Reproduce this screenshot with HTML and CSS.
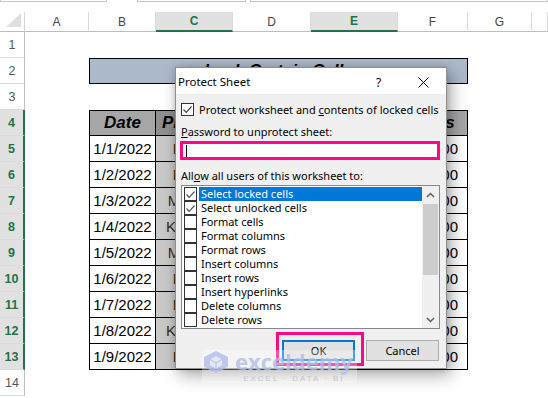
FILE: index.html
```html
<!DOCTYPE html>
<html>
<head>
    <title>Protect Sheet</title>
    <link rel="stylesheet" href="styles.css">
</head>
<body>
    <div class="screen">
        <div class="formula-strip">
            <span class="fbox name-box"></span>
            <span class="fbox fx-box"></span>
            <span class="fbox formula-box"></span>
        </div>

        <div class="sheet">
            <div class="row head-row">
                <div class="corner"><span class="corner-tri"></span></div>
                <div class="col-head">A</div>
                <div class="col-head">B</div>
                <div class="col-head selected">C</div>
                <div class="col-head">D</div>
                <div class="col-head selected">E</div>
                <div class="col-head">F</div>
                <div class="col-head">G</div>
                <div class="col-head"></div>
            </div>

            <div class="row"><div class="row-head">1</div></div>
            <div class="row">
                <div class="row-head">2</div>
                <div></div>
                <div class="title-cell">Lock Certain Cells</div>
            </div>
            <div class="row"><div class="row-head">3</div></div>

            <!-- columns D and E sit fully under the dialog -->
            <div class="row">
                <div class="row-head selected">4</div>
                <div></div>
                <div class="cell th first">Date</div>
                <div class="cell th picked">Product</div>
                <div class="cell th"></div>
                <div class="cell th picked"></div>
                <div class="cell th">Sales</div>
            </div>
            <div class="row">
                <div class="row-head selected">5</div>
                <div></div>
                <div class="cell first">1/1/2022</div>
                <div class="cell picked">Daniel</div>
                <div class="cell"></div>
                <div class="cell picked"></div>
                <div class="cell amount">$1,500</div>
            </div>
            <div class="row">
                <div class="row-head selected">6</div>
                <div></div>
                <div class="cell first">1/2/2022</div>
                <div class="cell picked">Daniel</div>
                <div class="cell"></div>
                <div class="cell picked"></div>
                <div class="cell amount">$2,300</div>
            </div>
            <div class="row">
                <div class="row-head selected">7</div>
                <div></div>
                <div class="cell first">1/3/2022</div>
                <div class="cell picked">Mathew</div>
                <div class="cell"></div>
                <div class="cell picked"></div>
                <div class="cell amount">$1,800</div>
            </div>
            <div class="row">
                <div class="row-head selected">8</div>
                <div></div>
                <div class="cell first">1/4/2022</div>
                <div class="cell picked">Kenneth</div>
                <div class="cell"></div>
                <div class="cell picked"></div>
                <div class="cell amount">$3,100</div>
            </div>
            <div class="row">
                <div class="row-head selected">9</div>
                <div></div>
                <div class="cell first">1/5/2022</div>
                <div class="cell picked">Mathew</div>
                <div class="cell"></div>
                <div class="cell picked"></div>
                <div class="cell amount">$2,100</div>
            </div>
            <div class="row">
                <div class="row-head selected">10</div>
                <div></div>
                <div class="cell first">1/6/2022</div>
                <div class="cell picked">Daniel</div>
                <div class="cell"></div>
                <div class="cell picked"></div>
                <div class="cell amount">$2,100</div>
            </div>
            <div class="row">
                <div class="row-head selected">11</div>
                <div></div>
                <div class="cell first">1/7/2022</div>
                <div class="cell picked">Daniel</div>
                <div class="cell"></div>
                <div class="cell picked"></div>
                <div class="cell amount">$1,100</div>
            </div>
            <div class="row">
                <div class="row-head selected">12</div>
                <div></div>
                <div class="cell first">1/8/2022</div>
                <div class="cell picked">Kenneth</div>
                <div class="cell"></div>
                <div class="cell picked"></div>
                <div class="cell amount">$2,100</div>
            </div>
            <div class="row">
                <div class="row-head selected">13</div>
                <div></div>
                <div class="cell first">1/9/2022</div>
                <div class="cell picked">Daniel</div>
                <div class="cell"></div>
                <div class="cell picked"></div>
                <div class="cell amount">$1,100</div>
            </div>
            <div class="row"><div class="row-head">14</div></div>
        </div>

        <!-- Protect Sheet dialog -->
        <div class="dialog">
            <div class="dialog-title">
                <span class="dialog-name">Protect Sheet</span>
                <span class="title-btn">?</span>
                <span class="title-btn">
                    <svg width="11" height="11" viewBox="0 0 11 11"><path d="M0.5 0.5 L10.5 10.5 M10.5 0.5 L0.5 10.5" stroke="#000" stroke-width="1"/></svg>
                </span>
            </div>

            <div class="dialog-body">
                <div class="check-row">
                    <span class="box">
                        <svg width="11" height="11" viewBox="0 0 11 11"><polyline points="1.5,5.5 4.2,8.3 9.5,2.5" fill="none" stroke="#444" stroke-width="1.2"/></svg>
                    </span>
                    <span>Protect worksheet and <u>c</u>ontents of locked cells</span>
                </div>

                <div class="label"><u>P</u>assword to unprotect sheet:</div>
                <div class="password"><span class="caret"></span></div>

                <div class="label allow">All<u>o</u>w all users of this worksheet to:</div>

                <div class="listbox">
                    <div class="items">
                        <div class="item">
                            <span class="box"><svg width="11" height="11" viewBox="0 0 11 11"><polyline points="1.5,5.5 4.2,8.3 9.5,2.5" fill="none" stroke="#555" stroke-width="1.2"/></svg></span>
                            <span class="item-text active">Select locked cells</span>
                        </div>
                        <div class="item">
                            <span class="box"><svg width="11" height="11" viewBox="0 0 11 11"><polyline points="1.5,5.5 4.2,8.3 9.5,2.5" fill="none" stroke="#555" stroke-width="1.2"/></svg></span>
                            <span class="item-text">Select unlocked cells</span>
                        </div>
                        <div class="item"><span class="box"></span><span class="item-text">Format cells</span></div>
                        <div class="item"><span class="box"></span><span class="item-text">Format columns</span></div>
                        <div class="item"><span class="box"></span><span class="item-text">Format rows</span></div>
                        <div class="item"><span class="box"></span><span class="item-text">Insert columns</span></div>
                        <div class="item"><span class="box"></span><span class="item-text">Insert rows</span></div>
                        <div class="item"><span class="box"></span><span class="item-text">Insert hyperlinks</span></div>
                        <div class="item"><span class="box"></span><span class="item-text">Delete columns</span></div>
                        <div class="item"><span class="box"></span><span class="item-text">Delete rows</span></div>
                    </div>
                    <div class="scrollbar">
                        <span class="arrow">
                            <svg width="9" height="6" viewBox="0 0 9 6"><polyline points="1,5 4.5,1.5 8,5" fill="none" stroke="#606060" stroke-width="1.5"/></svg>
                        </span>
                        <span class="thumb"></span>
                        <span class="track"></span>
                        <span class="arrow">
                            <svg width="9" height="6" viewBox="0 0 9 6"><polyline points="1,1 4.5,4.5 8,1" fill="none" stroke="#606060" stroke-width="1.5"/></svg>
                        </span>
                    </div>
                </div>

                <div class="buttons">
                    <span class="ok-mark"><span class="btn default">OK</span></span>
                    <span class="btn">Cancel</span>
                </div>
            </div>
        </div>

        <div class="watermark">
            <svg class="wm-logo" width="28" height="24" viewBox="0 0 28 24">
                <polygon points="14,1 26,7 26,17 14,23 2,17 2,7" fill="#b7c2ea"/>
                <polygon points="14,6 20,9.5 20,15 14,18.5 8,15 8,9.5" fill="#e3e8f8"/>
                <polyline points="8,9.5 14,13 20,9.5" fill="none" stroke="#b7c2ea" stroke-width="1.2"/>
                <line x1="14" y1="13" x2="14" y2="18.5" stroke="#b7c2ea" stroke-width="1.2"/>
            </svg>
            <div class="wm-text">
                <span class="wm-name">exceldemy</span>
                <span class="wm-tag">EXCEL · DATA · BI</span>
            </div>
        </div>
    </div>
</body>
</html>
```

FILE: styles.css
```css
/* Sheet + dialog screenshot */
body {
    margin: 0;
    font-family: "Liberation Sans", Arial, sans-serif;
    background: #fff;
}

.screen {
    position: relative;
    width: 548px;
    height: 398px;
    overflow: hidden;
    background: #fff;
}

/* remains of the formula bar */
.formula-strip {
    display: flex;
    height: 12px;
}

.fbox {
    display: block;
    height: 1px;
    border: 1px solid #c6c6c6;
    border-top: none;
}

.name-box {
    width: 105px;
}

.fx-box {
    width: 107px;
    margin-left: 30px;
}

.formula-box {
    flex: 1;
    margin-left: 4px;
}

/* grid of the sheet */
.row {
    display: grid;
    grid-template-columns: 25px 64px 67px 77px 78px 87px 70px 64px 16px;
    height: 26px;
}

.head-row {
    height: 20px;
}

.corner {
    position: relative;
    border-right: 1px solid #d4d4d4;
    border-bottom: 1px solid #bdbdbd;
    box-sizing: border-box;
}

.corner-tri {
    position: absolute;
    right: 3px;
    bottom: 4px;
    width: 0;
    height: 0;
    border-left: 15px solid transparent;
    border-bottom: 14px solid #dfdfdf;
}

.col-head {
    display: flex;
    align-items: center;
    justify-content: center;
    font-size: 12px;
    color: #444;
    border-right: 1px solid #d9d9d9;
    border-bottom: 1px solid #bdbdbd;
    box-sizing: border-box;
}

.col-head.selected {
    background: #e1e1e1;
    color: #217346;
    font-weight: bold;
    border-bottom: 2px solid #217346;
}

.row-head {
    display: flex;
    align-items: center;
    justify-content: center;
    font-size: 12.5px;
    color: #555;
    border-right: 1px solid #bdbdbd;
    border-bottom: 1px solid #dadada;
    box-sizing: border-box;
}

.row-head.selected {
    background: #e1e1e1;
    color: #217346;
    font-weight: bold;
    border-right: 2px solid #217346;
}

.title-cell {
    grid-column: span 5;
    background: #acb9ca;
    border: 1px solid #000;
    display: flex;
    align-items: center;
    justify-content: center;
    font-size: 17px;
    font-weight: bold;
    font-style: italic;
}

.cell {
    display: flex;
    align-items: center;
    justify-content: center;
    font-size: 15px;
    border-right: 1px solid #000;
    border-bottom: 1px solid #000;
    box-sizing: border-box;
    white-space: nowrap;
    overflow: hidden;
}

.cell.first {
    border-left: 1px solid #000;
}

.cell.amount {
    justify-content: flex-end;
    padding-right: 9px;
}

.cell.th {
    background: #a6a6a6;
    border-top: 1px solid #000;
    font-size: 17px;
    font-weight: bold;
    font-style: italic;
}

.cell.picked {
    background: #c9c9c9;
    color: #3a2a10;
}

.cell.th.picked {
    background: #8f8f8f;
    color: #000;
}

/* dialog */
.dialog {
    position: absolute;
    left: 175px;
    top: 67px;
    width: 272px;
    height: 302px;
    box-sizing: border-box;
    border: 1px solid #8e8e8e;
    background: #f0f0f0;
    font-family: "Noto Sans", "Open Sans", sans-serif;
    font-size: 11px;
    color: #000;
    box-shadow: 4px 6px 16px rgba(0, 0, 0, 0.35), 0 0 6px rgba(0, 0, 0, 0.15);
    display: flex;
    flex-direction: column;
}

.dialog-title {
    display: flex;
    align-items: center;
    height: 26px;
    background: #fff;
}

.dialog-name {
    flex: 1;
    padding-left: 2px;
    padding-top: 1px;
    font-size: 11.5px;
}

.title-btn {
    width: 45px;
    display: flex;
    justify-content: center;
    align-items: center;
    font-size: 12px;
    padding-top: 2px;
}

.dialog-body {
    display: flex;
    flex-direction: column;
    padding: 0 6px 0 4px;
}

.box {
    display: inline-flex;
    align-items: center;
    justify-content: center;
    width: 13px;
    height: 13px;
    box-sizing: border-box;
    border: 1px solid #333;
    background: #fff;
    flex: none;
}

.check-row {
    display: flex;
    align-items: center;
    gap: 5px;
    height: 14px;
    margin-top: 8px;
    margin-left: 1px;
}

.label {
    height: 15px;
    line-height: 15px;
    margin-top: 8px;
    margin-left: 1px;
}

.password {
    height: 19px;
    margin-top: 2px;
    box-sizing: border-box;
    border: 3px solid #fb0a84;
    background: #fff;
    display: flex;
    align-items: center;
}

.caret {
    display: block;
    width: 1px;
    height: 12px;
    margin-left: 3px;
    background: #000;
}

.label.allow {
    margin-top: 8px;
}

.listbox {
    display: flex;
    height: 144px;
    margin-top: 2px;
    margin-left: 1px;
    box-sizing: border-box;
    border: 1px solid #828790;
    background: #fff;
}

.items {
    flex: 1;
    padding: 1px 0 0 2px;
}

.item {
    display: flex;
    align-items: center;
    height: 14px;
}

.item .box {
    height: 14px;
}

.item-text {
    margin-left: 2px;
    padding-left: 2px;
    line-height: 14px;
    flex: 1;
}

.item-text.active {
    background: #0078d7;
    color: #fff;
}

.scrollbar {
    width: 17px;
    display: flex;
    flex-direction: column;
    background: #f0f0f0;
}

.arrow {
    height: 17px;
    display: flex;
    align-items: center;
    justify-content: center;
}

.thumb {
    height: 71px;
    margin: 1px 1px 0;
    background: #cdcdcd;
}

.track {
    flex: 1;
}

.buttons {
    display: flex;
    justify-content: flex-end;
    align-items: flex-start;
    margin-top: 3px;
    padding-right: 1px;
}

.ok-mark {
    display: block;
    border: 3px solid #fb0a84;
    padding: 5px 6px 2px 3px;
}

.btn {
    display: flex;
    align-items: center;
    justify-content: center;
    width: 73px;
    height: 21px;
    box-sizing: border-box;
    background: #e1e1e1;
    border: 1px solid #adadad;
    margin-top: 8px;
    margin-left: 2px;
}

.ok-mark .btn {
    margin: 0;
}

.btn.default {
    border: 2px solid #0078d7;
}

/* watermark */
.watermark {
    position: absolute;
    left: 202px;
    top: 350px;
    display: flex;
    align-items: flex-start;
    gap: 5px;
    padding-right: 4px;
    background: rgba(255, 255, 255, 0.35);
    opacity: 0.85;
}

.wm-text {
    display: flex;
    flex-direction: column;
    align-items: center;
}

.wm-name {
    font-family: "Open Sans", sans-serif;
    font-weight: bold;
    font-size: 22px;
    line-height: 22px;
    color: #b6c2ea;
}

.wm-tag {
    font-family: "Liberation Sans", sans-serif;
    font-size: 8px;
    letter-spacing: 2px;
    color: #c2c2c2;
    margin-top: 2px;
}
```
